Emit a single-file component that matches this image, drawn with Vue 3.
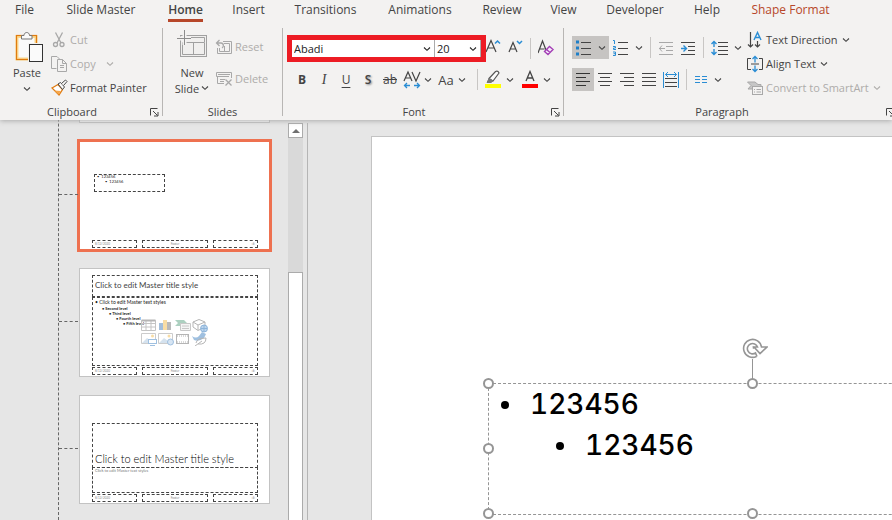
<script setup>
import { h, ref } from 'vue'

const Chevron = () =>
  h('svg', { class: 'chevron', width: 8, height: 6, viewBox: '0 0 8 6', 'aria-hidden': 'true' }, [
    h('path', { d: 'M1 1.5 L4 4.3 L7 1.5', fill: 'none', stroke: 'currentColor', 'stroke-width': 1.1 })
  ])

const Launcher = () =>
  h('svg', { width: 9, height: 9, viewBox: '0 0 9 9', 'aria-hidden': 'true' }, [
    h('path', {
      d: 'M.5 7.5 V.5 H7.5 M3 3 L7.5 7.5 M8 4 V8 H4',
      fill: 'none',
      stroke: '#444',
      'stroke-width': 1
    })
  ])

const tabs = [
  'File', 'Slide Master', 'Home', 'Insert', 'Transitions', 'Animations',
  'Review', 'View', 'Developer', 'Help', 'Shape Format'
]
const fontName = ref('Abadi')
const fontSize = ref('20')
const footers = [
  { kind: 'date', text: '8/12/2020' },
  { kind: 'middle', text: 'Footer' },
  { kind: 'number', text: '‹#›' }
]
const layouts = ['blank', 'selected', 'content', 'section']
const levels = ['Click to edit Master text styles', 'Second level', 'Third level', 'Fourth level', 'Fifth level']
const handles = ['nw', 'n', 'w', 'sw', 's']
</script>

<template>
  <div class="app">
    <header class="ribbon">
      <nav class="tabs">
        <a v-for="t in tabs" :key="t" href="#" :class="{ active: t === 'Home', context: t === 'Shape Format' }"><span>{{ t }}</span></a>
      </nav>

      <div class="groups">
        <section class="group clipboard">
          <div class="content">
            <button class="big paste">
              <svg width="32" height="32" viewBox="0 0 32 32">
                <rect x="6" y="6.5" width="19" height="22.5" fill="#fafafa" stroke="#fbd98f" stroke-width="3" />
                <rect x="5.5" y="5.5" width="20" height="24" fill="none" stroke="#e07b10" stroke-width="1.2" />
                <path d="M10.5 9 V5.5 H13 C13 1.5 18.5 1.5 18.5 5.5 H21 V9 Z" fill="#fafafa" stroke="#777" />
                <rect x="17" y="13" width="15" height="19" fill="#f3f2f1" />
                <rect x="18.5" y="14.5" width="13" height="17" fill="#fafafa" stroke="#333" />
              </svg>
              <span>Paste</span>
              <Chevron />
            </button>
            <div class="stack">
              <button disabled>
                <svg width="18" height="18" viewBox="0 0 18 18" fill="none" stroke="#a8a8a8" stroke-width="1.3">
                  <path d="M5.5 1.5 L11 12 M12.5 1.5 L7 12" />
                  <circle cx="5.5" cy="13.5" r="2" /><circle cx="12" cy="13.5" r="2" />
                </svg>Cut
              </button>
              <button disabled>
                <svg width="18" height="18" viewBox="0 0 18 18" fill="none" stroke="#a8a8a8">
                  <path d="M6.5 13.5 H1.5 V1.5 H7 L9.5 4" />
                  <path d="M7.5 4.5 H12.5 L16.5 8.5 V16.5 H7.5 Z M12.5 4.5 V8.5 H16.5 M10 10.5 H14 M10 12.5 H14" />
                </svg>Copy<Chevron class="far" />
              </button>
              <button>
                <svg width="18" height="18" viewBox="0 0 18 18">
                  <path d="M2 9 L8 5.5 L12.5 10.5 L9 16 Z" fill="#fff" stroke="#e07b10" stroke-width="1.3" />
                  <path d="M4.5 11.5 L11 12 L8.5 15.5 Z" fill="#f5a64b" />
                  <path d="M8 5 L10.5 3.5 L14.5 8 L12.5 10.5 Z" fill="#fafafa" stroke="#444" />
                  <path d="M11.5 4.5 L15.5 1 L17 2.5 L13.5 6.5" fill="#fafafa" stroke="#444" />
                </svg>Format Painter
              </button>
            </div>
          </div>
          <footer><span>Clipboard</span><button aria-label="Clipboard options"><Launcher /></button></footer>
        </section>

        <section class="group slides">
          <div class="content">
            <button class="big new-slide">
              <svg width="32" height="32" viewBox="0 0 32 32" fill="none" stroke="#a0a0a0">
                <rect x="4.5" y="5.5" width="26" height="21" fill="#f0efee" />
                <path d="M6.5 12.5 H28.5 V24.5 H6.5 Z M17.5 12.5 V24.5 M12 7.5 H28.5 V12" />
                <path d="M8.5 0 V15 M1 8.5 H15" stroke="#f3f2f1" stroke-width="4" />
                <path d="M8.5 0 V15 M1 8.5 H15" stroke="#8c8c8c" />
              </svg>
              <span>New</span>
              <span>Slide<Chevron /></span>
            </button>
            <div class="stack wide">
              <button disabled>
                <svg width="18" height="16" viewBox="0 0 18 16" fill="none" stroke="#a8a8a8">
                  <path d="M8 2.5 H16.5 V14.5 H2.5 V9 M9 4.5 H14.5 V12.5 H4.5 V9 M9.5 7 V12" />
                  <path d="M4.5 1 L1.5 4 L4.5 7 M2 4 H6 C9 4 9 8 7 9" stroke-width="1.3" />
                </svg>Reset
              </button>
              <button disabled>
                <svg width="18" height="16" viewBox="0 0 18 16" fill="none" stroke="#a8a8a8">
                  <path d="M16.5 7 V1.5 H1.5 V5.5 H14 M3 3.5 H15 M2.5 6 V12.5 H9 M5 8.5 H10 M5 10.5 H9" />
                  <path d="M10.5 8.5 L16.5 14.5 M16.5 8.5 L10.5 14.5" stroke-width="1.3" />
                </svg>Delete
              </button>
            </div>
          </div>
          <footer><span>Slides</span></footer>
        </section>

        <section class="group font">
          <div class="row combo-row">
            <div class="combo">
              <div class="field name"><input v-model="fontName" aria-label="Font" /><button aria-label="Choose font"><Chevron /></button></div>
              <div class="field size"><input v-model="fontSize" aria-label="Font size" /><button aria-label="Choose size"><Chevron /></button></div>
            </div>
            <button class="tool" aria-label="Increase font size">
              <svg width="16" height="20" viewBox="0 0 16 20" fill="none" stroke="#444" stroke-width="1.2">
                <path d="M0 13 L5 1.5 L10 13 M2 9 H8" /><path d="M9 4.5 L11.5 2 L14 4.5" stroke="#2a8dd4" stroke-width="1.5" />
              </svg>
            </button>
            <button class="tool" aria-label="Decrease font size">
              <svg width="16" height="20" viewBox="0 0 16 20" fill="none" stroke="#444" stroke-width="1.2">
                <path d="M1 13 L5 3.5 L9 13 M2.5 10 H7.5" /><path d="M9 2 L11.5 4.5 L14 2" stroke="#2a8dd4" stroke-width="1.5" />
              </svg>
            </button>
            <i class="sep"></i>
            <button class="tool" aria-label="Clear formatting">
              <svg width="18" height="20" viewBox="0 0 18 20" fill="none" stroke="#444" stroke-width="1.2">
                <path d="M0 14 L4.500 2 L8 11 M1.500 10 H6.500" />
                <path d="M6.500 12.500 L11.500 7.500 L15 10.500 L10 15.500 Z M8.500 10.500 L12 13.500" fill="#f7e9fb" stroke="#a33fb5" stroke-width="1.4" />
              </svg>
            </button>
          </div>
          <div class="row style-row">
            <button class="letter bold">B</button>
            <button class="letter italic">I</button>
            <button class="letter underline">U</button>
            <button class="letter shadow">S</button>
            <button class="letter strike">ab</button>
            <button class="tool split" aria-label="Character spacing">
              <svg width="20" height="20" viewBox="0 0 20 20" fill="none" stroke="#444" stroke-width="1.2">
                <path d="M1 11 L5 2 L9 11 M2.5 8 H7.5 M9 2 L13 11 L17 2" />
                <path d="M1.5 15.5 H7 M11 15.5 H16.5 M4 13 L1.5 15.5 L4 18 M14 13 L16.5 15.5 L14 18" stroke="#2a8dd4" stroke-width="1.3" />
              </svg><Chevron />
            </button>
            <button class="letter case">Aa<Chevron /></button>
            <i class="sep"></i>
            <button class="tool split color" aria-label="Highlight color">
              <svg width="18" height="20" viewBox="0 0 18 20" fill="none">
                <path d="M5 8.5 L11.5 1.5 Q14 .5 15 3 L9 11 Z" fill="#fafafa" stroke="#555" stroke-width="1.2" />
                <path d="M5 8.5 L9 11 L7 12.5 H3 Z" fill="#777" stroke="#777" />
                <rect x="1" y="14" width="16" height="4" fill="#ff0" />
              </svg><Chevron />
            </button>
            <button class="tool split color" aria-label="Font color">
              <svg width="18" height="20" viewBox="0 0 18 20" fill="none">
                <path d="M5 11 L9 1.5 L13 11 M6.5 8 H11.5" stroke="#444" stroke-width="1.3" />
                <rect x="1" y="14" width="16" height="4" fill="#f00" />
              </svg><Chevron />
            </button>
          </div>
          <footer><span>Font</span><button aria-label="Font options"><Launcher /></button></footer>
        </section>

        <section class="group paragraph">
          <div class="content">
            <div class="tools">
              <div class="row">
                <button class="tool split on" aria-label="Bullets">
                  <svg width="18" height="18" viewBox="0 0 18 18">
                    <path d="M1 1.5 h3 v3 h-3z M1 7.5 h3 v3 h-3z M1 13.5 h3 v3 h-3z" fill="#1e7fc8" />
                    <path d="M6 3.5 H16 M6 9.5 H16 M6 15.5 H16" stroke="#444" />
                  </svg><Chevron />
                </button>
                <button class="tool split" aria-label="Numbering">
                  <svg width="18" height="18" viewBox="0 0 18 18" fill="none" stroke="#2a8dd4">
                    <path d="M1 1.5 H2.5 V5 M1 7.5 H3.5 V9 H1.5 V10.5 H4 M1 13 H3.5 V16.5 H1 M1.5 14.7 H3.5" />
                    <path d="M6 3.5 H16 M6 9.5 H16 M6 15.5 H16" stroke="#444" />
                  </svg><Chevron />
                </button>
                <i class="sep"></i>
                <button class="tool" disabled aria-label="Decrease indent">
                  <svg width="16" height="18" viewBox="0 0 16 18" fill="none" stroke="#a8a8a8">
                    <path d="M1 3.5 H15 M8 7.5 H15 M8 11.5 H15 M1 15.5 H15 M1 9.5 H7 M4 6.5 L1.5 9.5 L4 12.5" />
                  </svg>
                </button>
                <button class="tool" aria-label="Increase indent">
                  <svg width="16" height="18" viewBox="0 0 16 18" fill="none" stroke="#444">
                    <path d="M1 3.5 H15 M8 7.5 H15 M8 11.5 H15 M1 15.5 H15" />
                    <path d="M1 9.5 H6 M3.5 6.5 L6.5 9.5 L3.5 12.5" stroke="#2a8dd4" stroke-width="1.4" />
                  </svg>
                </button>
                <i class="sep"></i>
                <button class="tool split" aria-label="Line spacing">
                  <svg width="18" height="18" viewBox="0 0 18 18" fill="none" stroke="#444">
                    <path d="M7 3.5 H17 M7 7.5 H17 M7 11.5 H17 M7 15.5 H17" />
                    <path d="M3 3 V8 M3 10 V15 M.5 5 L3 2.5 L5.5 5 M.5 13 L3 15.5 L5.5 13" stroke="#2a8dd4" stroke-width="1.4" />
                  </svg><Chevron />
                </button>
              </div>
              <div class="row">
                <button class="tool on" aria-label="Align left">
                  <svg width="16" height="16" viewBox="0 0 16 16"><path d="M1 1.5 H15 M1 5.5 H11 M1 9.5 H15 M1 13.5 H11" stroke="#333" /></svg>
                </button>
                <button class="tool" aria-label="Center">
                  <svg width="16" height="16" viewBox="0 0 16 16"><path d="M1 1.5 H15 M3 5.5 H13 M1 9.5 H15 M3 13.5 H13" stroke="#444" /></svg>
                </button>
                <button class="tool" aria-label="Align right">
                  <svg width="16" height="16" viewBox="0 0 16 16"><path d="M1 1.5 H15 M5 5.5 H15 M1 9.5 H15 M5 13.5 H15" stroke="#444" /></svg>
                </button>
                <button class="tool" aria-label="Justify">
                  <svg width="16" height="16" viewBox="0 0 16 16"><path d="M1 1.5 H15 M1 5.5 H15 M1 9.5 H15 M1 13.5 H15" stroke="#444" /></svg>
                </button>
                <button class="tool" aria-label="Distribute">
                  <svg width="16" height="18" viewBox="0 0 16 18" fill="none">
                    <path d="M2 7.5 H14 M2 11.5 H14 M2 15.5 H14" stroke="#444" />
                    <path d="M.5 1 V17 M15.5 1 V17 M2.5 3.5 H13.5 M5 1 L2.5 3.5 L5 6 M11 1 L13.5 3.5 L11 6" stroke="#2a8dd4" />
                  </svg>
                </button>
                <i class="sep"></i>
                <button class="tool split columns" aria-label="Columns">
                  <svg width="16" height="16" viewBox="0 0 16 16"><path d="M2 4.5 H7 M9 4.5 H14 M2 7.5 H7 M9 7.5 H14 M2 10.5 H7 M9 10.5 H14" stroke="#2a8dd4" /></svg><Chevron />
                </button>
              </div>
            </div>
            <div class="stack">
              <button>
                <svg width="18" height="18" viewBox="0 0 18 18" fill="none" stroke="#444">
                  <path d="M4.5 1 V16 M2 13.5 L4.5 16 L7 13.5 M11.5 10 V16 M9 13.5 L11.5 16 L14 13.5" stroke-width="1.2" />
                  <path d="M8 9 L11.5 1.5 L15 9 M9.5 6.5 H13.5" stroke="#2a8dd4" stroke-width="1.4" />
                </svg>Text Direction<Chevron />
              </button>
              <button>
                <svg width="18" height="18" viewBox="0 0 18 18" fill="none" stroke="#444">
                  <path d="M5 3.5 H1.5 V14.5 H5 M13 3.5 H16.5 V14.5 H13 M5 9 H13" />
                  <path d="M9 1.5 V7.5 M9 10.5 V16.5 M6.5 4 L9 1.5 L11.5 4 M6.5 14 L9 16.5 L11.5 14" stroke="#2a8dd4" stroke-width="1.3" />
                </svg>Align Text<Chevron />
              </button>
              <button disabled>
                <svg width="18" height="18" viewBox="0 0 18 18" fill="none" stroke="#a8a8a8">
                  <path d="M1.5 3 H9 L12 5.5 H15 V8 H7 V10 H2 L5 6.5 Z" fill="#c6c6c6" />
                  <rect x="6.5" y="7.5" width="10" height="8" fill="#f3f2f1" />
                  <path d="M8 10.5 H9 M10.5 10.5 H15 M8 13 H9 M10.5 13 H15" />
                </svg>Convert to SmartArt<Chevron />
              </button>
            </div>
          </div>
          <footer><span>Paragraph</span><button aria-label="Paragraph options"><Launcher /></button></footer>
        </section>
      </div>
    </header>

    <main class="workspace">
      <aside class="panel">
        <div class="list">
          <article v-for="kind in layouts" :key="kind" class="thumb" :class="kind">
            <template v-if="kind === 'selected'">
              <div class="ph box"><p>•&nbsp; 123456</p><p>•&nbsp; 123456</p></div>
            </template>
            <template v-if="kind === 'content'">
              <div class="ph title">Click to edit Master title style</div>
              <div class="ph body">
                <p v-for="(l, i) in levels" :key="l" :class="'lv' + i">• {{ l }}</p>
              </div>
              <svg class="placeholder-icons" width="68" height="28" viewBox="0 0 68 28" fill="none" stroke="#b5b5b5">
                <path d="M.5 2.5 H14.5 V12.5 H.5 Z M.5 5.5 H14.5 M.5 9 H14.5 M5 3 V12 M10 3 V12" stroke="#c4c4c4" />
                <path d="M.5 2.5 H14.5" stroke-width="2" />
                <path d="M18 5 h4 v7 h-4z" fill="#a3bfdc" stroke="none" /><path d="M22 2 h4 v10 h-4z" fill="#f8dda5" stroke="none" /><path d="M26 4 h4 v8 h-4z" fill="#b9b9b9" stroke="none" />
                <path d="M34 2 H43 L46 5 V8 H34 L37 5 Z" fill="#acd0c0" stroke="none" />
                <path d="M39.5 5.5 H49.5 V12.5 H39.5 Z M41 8 H48 M41 10.5 H48" fill="#f5f5f5" stroke="#c8c8c8" />
                <path d="M52 4 L58 1.5 L64 4 V9 L57 12.5 L52 9 Z M52 4 L57 7 L64 4 M57 7 V12" />
                <circle cx="63" cy="10.5" r="3.5" fill="#bdd6ee" stroke="#8db4da" /><path d="M60 10.5 H66 M63 7 V14" stroke="#8db4da" />
                <path d="M.5 15.5 H14.5 V25.5 H.5 Z M17.5 15.5 H31.5 V25.5 H17.5 Z" stroke="#ccc" />
                <path d="M1 25 L6 20 L9 22 V25 Z M18 25 L23 20 L27 23 V25 Z" fill="#d5e2ee" stroke="none" />
                <circle cx="11.5" cy="18" r="1.5" fill="#f8dda5" stroke="none" /><circle cx="28" cy="18" r="1.5" fill="#f8dda5" stroke="none" />
                <rect x="7.5" y="21.5" width="8" height="4" fill="#fff" stroke="#9fc0e0" /><path d="M9 27.5 H14" stroke="#9fc0e0" />
                <circle cx="29.5" cy="24" r="3" fill="#d7e5f3" stroke="#9fc0e0" />
                <rect x="35.5" y="16.5" width="12" height="9" /><path d="M36 18 H47 M36 24 H47" stroke-dasharray="1 1" />
                <path d="M51 18 Q55 21 58 18 L61 14 L65 16 L63 20 Q58 24 53 22 Z" fill="#9fc0e0" stroke="none" />
                <path d="M55 25 Q56 20 65 20 Q65 27 57 26 M54 28 L61 23" />
              </svg>
            </template>
            <template v-if="kind === 'section'">
              <div class="ph title">Click to edit Master title style</div>
              <div class="ph body">Click to edit Master text styles</div>
            </template>
            <template v-if="kind !== 'blank'">
              <div v-for="f in footers" :key="f.kind" class="ph foot" :class="f.kind">{{ f.text }}</div>
            </template>
          </article>
        </div>
        <div class="scrollbar">
          <button aria-label="Scroll up"><svg width="8" height="4" viewBox="0 0 8 4"><path d="M0 4 L4 0 L8 4 Z" fill="#707070" /></svg></button>
          <div class="track"></div>
          <div class="grip"></div>
        </div>
      </aside>

      <div class="canvas">
        <div class="slide">
          <div class="frame">
            <ul>
              <li>123456</li>
              <li class="sub">123456</li>
            </ul>
            <i v-for="p in handles" :key="p" class="handle" :class="p"></i>
            <svg class="rotate" width="28" height="46" viewBox="0 0 28 46" fill="none" stroke="#959595">
              <path d="M12.5 22 V42" />
              <path d="M16.5 19.5 A9 9 0 1 1 21.5 10 H27 L20 16.500 L14 10 H17.500 A5.200 5.200 0 1 0 15.500 16 L17 19.500" stroke-width="1.6" />
              <path d="M14 10 L13 11.500" stroke-width="1.6" />
            </svg>
          </div>
        </div>
      </div>
    </main>
  </div>
</template>

<style>
body {
  overflow: hidden;
}
</style>

<style scoped>
.app {
  height: 100vh;
  display: flex;
  flex-direction: column;
  overflow: hidden;
  background: #e6e6e6;
  color: #444;
  font: 12px/16px "Open Sans", "Noto Sans", sans-serif;
}
button {
  border: 0;
  padding: 0;
  margin: 0;
  background: none;
  font: inherit;
  color: inherit;
  display: flex;
  align-items: center;
  white-space: nowrap;
}
button:disabled {
  color: #aeacaa;
}
svg {
  flex: none;
  display: block;
}
p {
  margin: 0;
}

.ribbon {
  position: relative;
  z-index: 1;
  flex: none;
  background: #f3f2f1;
  box-shadow: 0 1px 5px #aaa;
}
.tabs {
  display: grid;
  grid-template-columns: 49px 104px 65px 61px 93px 96px 68px 55px 88px 56px 111px;
  height: 28px;
}
.tabs a {
  display: flex;
  justify-content: center;
  color: #444;
  text-decoration: none;
  white-space: nowrap;
}
.tabs span {
  height: 20px;
  line-height: 20px;
}
.tabs .active span {
  height: 19px;
  border-bottom: 3px solid #b7472a;
  font-weight: 600;
}
.tabs .context {
  color: #b7472a;
}

.groups {
  display: flex;
  font-size: 11px;
}
.group {
  flex: none;
  display: flex;
  flex-direction: column;
  height: 88px;
  margin-bottom: 4px;
  border-right: 1px solid #b8b6b4;
}
.clipboard { width: 162px; }
.slides { width: 119px; }
.font { width: 280px; }
.paragraph { width: 334px; }
.group .content {
  display: flex;
}
.group footer {
  display: flex;
  align-items: center;
  height: 16px;
  margin-top: auto;
  margin-bottom: -4px;
}
.group footer span {
  flex: 1;
  text-align: center;
}
.group footer button {
  flex: none;
  width: 18px;
  padding: 0 3px 0 6px;
}
.clipboard .content { padding-left: 11px; gap: 7px; }
.slides .content { padding-left: 10px; gap: 4px; }
.big {
  flex-direction: column;
  line-height: 16px;
}
.big span {
  display: flex;
  align-items: center;
  gap: 2px;
}
.paste { padding-top: 2px; }
.paste span { margin: 3px 0 5px; }
.new-slide { width: 38px; padding-top: 2px; }
.new-slide svg:first-child { margin-bottom: 3px; }
.stack button {
  height: 24px;
  gap: 2px;
}
.stack .chevron { margin-left: 2px; }
.stack .far { margin-left: 8px; }
.stack.wide { padding-top: 3px; }
.stack.wide button { height: 32px; }

.row {
  display: flex;
  align-items: center;
  height: 23px;
}
.tool {
  width: 22px;
  height: 23px;
  justify-content: center;
}
.split { width: 37px; gap: 5px; }
.on { background: #c6c4c2; }
.sep {
  width: 1px;
  height: 21px;
  margin: 0 4px;
  background: #c8c6c4;
}
.combo-row {
  height: 27px;
  padding: 7px 0 6px 4px;
}
.combo-row .tool { justify-content: flex-start; }
.combo-row .sep { margin: 0 7px 0 0; }
.combo {
  display: flex;
  width: 189px;
  height: 17px;
  border: 5px solid #ed1c24;
  background: #fff;
  color: #222;
}
.field {
  display: flex;
}
.field input {
  min-width: 0;
  width: 100%;
  padding: 0 2px;
  border: 0;
  outline: 0;
  background: none;
  font: inherit;
  color: inherit;
}
.field button { width: 14px; justify-content: center; flex: none; }
.name { flex: 1; }
.size { width: 45px; border-left: 1px solid #ababab; border-right: 1px solid #ababab; }
.style-row { padding-left: 8px; }
.style-row .split { width: 33px; gap: 1px; }
.style-row .sep { margin: 0 6px 0 7px; }
.letter {
  width: 22px;
  height: 23px;
  justify-content: center;
  font-size: 12px;
}
.bold { font-weight: 700; }
.italic { font-family: "Liberation Serif", serif; font-style: italic; font-size: 14px; }
.underline { text-decoration: underline; text-underline-offset: 3px; }
.shadow { font-weight: 600; text-shadow: 1px 1px 2px #888; }
.strike { text-decoration: line-through; }
.case { width: 36px; gap: 4px; font-size: 13px; }
.style-row .color { width: 37px; gap: 4px; justify-content: flex-start; }

.paragraph .content { padding-left: 8px; }
.tools {
  display: flex;
  flex-direction: column;
  gap: 9px;
  width: 174px;
  padding-top: 8px;
}
.columns { width: 33px; }

.workspace {
  flex: 1;
  min-height: 0;
  display: flex;
}
.panel {
  flex: none;
  display: flex;
  justify-content: space-between;
  width: 303px;
  padding-right: 4px;
  margin-top: 3px;
  border-right: 1px solid #b5b5b5;
}
.list {
  display: flex;
  flex-direction: column;
  gap: 18px;
  margin: -109px 0 0 58px;
  padding-left: 20px;
  border-left: 1px dashed #666;
}
.thumb {
  position: relative;
  flex: none;
  box-sizing: border-box;
  width: 191px;
  height: 109px;
  border: 1px solid #c3c3c3;
  background: #fff;
}
.thumb::before {
  content: "";
  position: absolute;
  left: -21px;
  top: 52px;
  width: 19px;
  border-top: 1px dashed #666;
}
.thumb.selected {
  outline: 3px solid #ee7150;
  outline-offset: -1px;
}
.ph {
  position: absolute;
  box-sizing: border-box;
  border: 1px dashed #444;
  white-space: nowrap;
  font-family: Lato, "Open Sans", sans-serif;
}
.foot {
  top: 98px;
  height: 8px;
  padding: 0 2px;
  font-size: 3px;
  line-height: 6px;
  color: #888;
}
.date { left: 12px; width: 45px; }
.middle { left: 62px; width: 66px; text-align: center; }
.number { left: 133px; width: 45px; text-align: right; }
.box {
  left: 14px;
  top: 32px;
  width: 71px;
  height: 18px;
  padding-left: 2px;
  font-size: 4px;
  line-height: 5px;
  color: #222;
}
.box p { line-height: 4px; }
.box p + p { padding-left: 8px; line-height: 6px; }
.content .title, .content .body, .section .title, .section .body {
  left: 12px;
  width: 166px;
  padding-left: 2px;
}
.content .title { top: 6px; height: 22px; font-size: 8px; line-height: 18px; }
.content .body { top: 28px; height: 69px; color: #222; font-size: 4px; line-height: 5px; font-weight: 700; }
.content .body .lv0 { font-size: 5px; line-height: 8px; font-weight: 400; }
.lv1 { padding-left: 7px; }
.lv2 { padding-left: 14px; }
.lv3 { padding-left: 21px; }
.lv4 { padding-left: 28px; }
.placeholder-icons { position: absolute; left: 61px; top: 49px; }
.section .title {
  top: 27px;
  height: 45px;
  display: flex;
  align-items: flex-end;
  font-size: 11px;
  font-weight: 300;
  line-height: 16px;
  color: #000;
}
.section .body { top: 71px; height: 26px; font-size: 4px; line-height: 6px; color: #777; }

.scrollbar {
  display: flex;
  flex-direction: column;
  width: 15px;
  background: #d9d9d9;
}
.scrollbar button {
  justify-content: center;
  height: 15px;
  border: 1px solid #ababab;
  background: #fff;
}
.track { flex: 134; }
.grip { flex: 248; border: 1px solid #ababab; border-bottom: 0; background: #fff; }

.canvas {
  flex: 1;
  min-width: 0;
  padding: 16px 0 0 63px;
  overflow: hidden;
  display: flex;
}
.slide {
  position: relative;
  flex: 1;
  border: solid #c3c3c3;
  border-width: 1px 0 0 1px;
  background: #fff;
}
.frame {
  position: absolute;
  left: 116px;
  top: 246px;
  width: 527px;
  height: 130px;
  border: 1px dashed #959595;
}
.frame ul {
  margin: 0;
  padding: 0 0 0 12px;
  list-style: none;
  color: #000;
  font: 500 28px/41px Inter, sans-serif;
  font-variant-numeric: tabular-nums;
}
.frame li {
  display: flex;
  align-items: center;
  gap: 21px;
}
.frame li::before {
  content: "";
  width: 8px;
  height: 8px;
  border-radius: 50%;
  background: #000;
}
.frame .sub { padding-left: 55px; }
.handle {
  position: absolute;
  width: 7px;
  height: 7px;
  margin: -6px 0 0 -6px;
  border: 2px solid #959595;
  border-radius: 50%;
  background: #fff;
}
.nw { left: 0; top: 0; }
.n { left: 50%; top: 0; }
.w { left: 0; top: 50%; }
.sw { left: 0; top: 100%; }
.s { left: 50%; top: 100%; }
.rotate {
  position: absolute;
  left: 251px;
  top: -47px;
}
</style>
